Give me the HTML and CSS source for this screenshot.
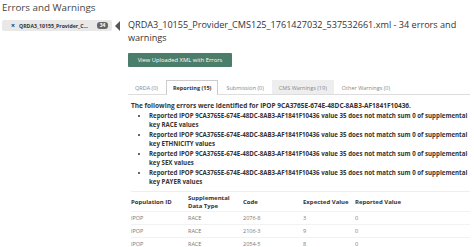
FILE: index.html
```html
<!DOCTYPE html>
<html>
<head>
<meta charset="utf-8">
<link rel="stylesheet" href="styles.css">
</head>
<body>
<h1 class="page-title">Errors and Warnings</h1>
<div class="layout">
  <aside class="sidebar">
    <div class="file-pill">
      <span class="pill-x">×</span>
      <span class="pill-name">QRDA3_10155_Provider_C...</span>
      <span class="pill-badge">34</span>
    </div>
    <span class="pill-arrow"></span>
  </aside>
  <main class="main">
    <h2 class="file-heading">QRDA3_10155_Provider_CMS125_1761427032_537532661.xml - 34 errors and warnings</h2>
    <button class="btn-view">View Uploaded XML with Errors</button>
    <nav class="tabs">
      <span class="tab">QRDA (0)</span>
      <span class="tab tab-active">Reporting (15)</span>
      <span class="tab">Submission (0)</span>
      <span class="tab tab-hover">CMS Warnings (19)</span>
      <span class="tab">Other Warnings (0)</span>
    </nav>
    <section class="panel">
      <p class="intro">The following errors were identified for IPOP 9CA3765E-674E-48DC-8AB3-AF1841F10436.</p>
      <ul class="errors">
        <li>Reported IPOP 9CA3765E-674E-48DC-8AB3-AF1841F10436 value 35 does not match sum 0 of supplemental key RACE values</li>
        <li>Reported IPOP 9CA3765E-674E-48DC-8AB3-AF1841F10436 value 35 does not match sum 0 of supplemental key ETHNICITY values</li>
        <li>Reported IPOP 9CA3765E-674E-48DC-8AB3-AF1841F10436 value 35 does not match sum 0 of supplemental key SEX values</li>
        <li>Reported IPOP 9CA3765E-674E-48DC-8AB3-AF1841F10436 value 35 does not match sum 0 of supplemental key PAYER values</li>
      </ul>
      <table class="data">
        <thead>
          <tr><th class="c1">Population ID</th><th class="c2">Supplemental Data Type</th><th class="c3">Code</th><th class="c4">Expected Value</th><th class="c5">Reported Value</th></tr>
        </thead>
        <tbody>
          <tr><td>IPOP</td><td>RACE</td><td>2076-8</td><td>3</td><td>0</td></tr>
          <tr><td>IPOP</td><td>RACE</td><td>2106-3</td><td>9</td><td>0</td></tr>
          <tr><td>IPOP</td><td>RACE</td><td>2054-5</td><td>8</td><td>0</td></tr>
        </tbody>
      </table>
    </section>
  </main>
</div>
</body>
</html>
```
FILE: styles.css
```css
html, body {
  margin: 0;
  padding: 0;
  background: #fff;
  font-family: "Open Sans", "DejaVu Sans", sans-serif;
  color: #333;
  overflow: hidden;
}
.page-title {
  margin: 0;
  padding: 0 0 0 2px;
  font-size: 9.8px;
  font-weight: 400;
  line-height: 16px;
  color: #444;
}
.layout {
  display: flex;
  align-items: flex-start;
  margin-top: 4px;
}
.sidebar {
  width: 128px;
  flex: none;
  display: flex;
  align-items: center;
  padding-left: 2px;
  box-sizing: border-box;
}
.file-pill {
  width: 110px;
  height: 11px;
  background: #e8e8e8;
  border-radius: 2px;
  display: flex;
  align-items: center;
  padding: 0 4px 0 9px;
  box-sizing: border-box;
  font-size: 5.2px;
  font-weight: 700;
  color: #333;
}
.pill-x {
  font-size: 7px;
  margin-right: 4px;
  line-height: 1;
}
.pill-name {
  flex: 1;
  white-space: nowrap;
}
.pill-badge {
  background: #666;
  color: #fff;
  border-radius: 3px;
  font-size: 5px;
  padding: 0 2px;
  line-height: 7px;
  width: 7px;
  text-align: center;
}
.pill-arrow {
  width: 0;
  height: 0;
  margin-left: 3px;
  border-top: 5px solid transparent;
  border-bottom: 5px solid transparent;
  border-right: 5px solid #555;
}
.main {
  flex: 1;
  padding-right: 4px;
}
.file-heading {
  margin: -2px 0 0;
  font-size: 9.1px;
  font-weight: 400;
  line-height: 13px;
  color: #333;
}
.btn-view {
  margin-top: 9px;
  display: block;
  height: 14px;
  width: 104px;
  padding: 0;
  border: none;
  border-radius: 1px;
  background: #4b7d6b;
  color: #fff;
  font-family: inherit;
  font-size: 5.8px;
}
.tabs {
  margin-top: 13px;
  display: flex;
  border-bottom: 1px solid #ddd;
  padding-left: 0;
  height: 14px;
  font-size: 5.5px;
}
.tab {
  padding: 0 6px;
  line-height: 14px;
  color: #888;
  border: 1px solid transparent;
  border-bottom: none;
  margin-right: 1px;
}
.tab-active {
  color: #333;
  font-weight: 700;
  border-color: #ccc;
  background: #fff;
  height: 14px;
  margin-bottom: -1px;
}
.tab-hover {
  background: #eee;
}
.panel {
  padding: 6px 0 0 3px;
  color: #333;
}
.intro {
  margin: 0;
  font-size: 6.5px;
  font-weight: 700;
  line-height: 9.5px;
}
.errors {
  margin: 0;
  padding-left: 18px;
  font-size: 6.15px;
  font-weight: 700;
  line-height: 9.5px;
}
.data {
  margin-top: 4px;
  border-collapse: collapse;
  width: 100%;
  border-top: 1px solid #eee;
}
.data th {
  text-align: left;
  font-weight: 700;
  font-size: 6px;
  line-height: 8px;
  padding: 2px 0 1px;
  vertical-align: middle;
}
.data td {
  font-size: 5.5px;
  color: #777;
  padding: 0;
  height: 12px;
  border-top: 1px solid #f2f2f2;
}
.c1 { width: 57px; }
.c2 { width: 55px; }
.c3 { width: 60px; }
.c4 { width: 52px; }
```
